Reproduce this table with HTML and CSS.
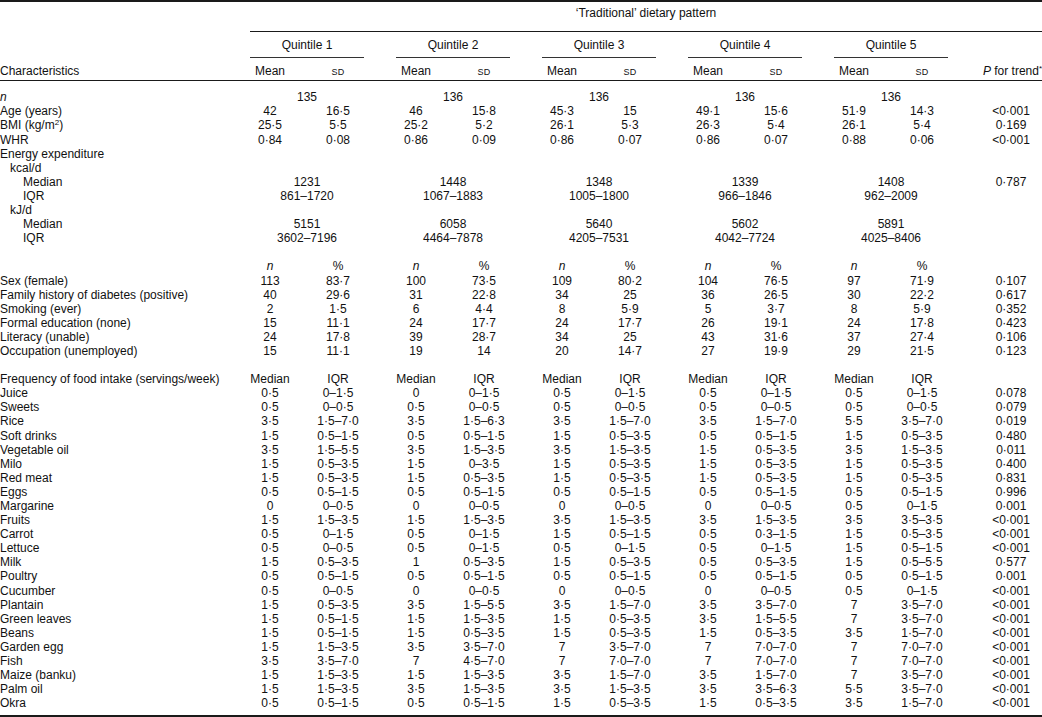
FILE: index.html
```html
<!DOCTYPE html>
<html lang="en">
<head>
<meta charset="utf-8">
<title>Traditional dietary pattern</title>
<link rel="stylesheet" href="styles.css">
</head>
<body>
<table class="t">
<colgroup>
<col class="c-lab">
<col class="c-m"><col class="c-s">
<col class="c-m"><col class="c-s">
<col class="c-m"><col class="c-s">
<col class="c-m"><col class="c-s">
<col class="c-m"><col class="c-s">
<col class="c-p">
</colgroup>
<thead>
<tr class="h1"><th></th><th colspan="11" class="trad">‘Traditional’ dietary pattern</th></tr>
<tr class="h2"><th></th><th colspan="2" class="q"><div>Quintile 1</div></th><th colspan="2" class="q"><div>Quintile 2</div></th><th colspan="2" class="q"><div>Quintile 3</div></th><th colspan="2" class="q"><div>Quintile 4</div></th><th colspan="2" class="q"><div>Quintile 5</div></th><th></th></tr>
<tr class="h3"><th class="lab">Characteristics</th><th class="m">Mean</th><th class="s"><span class="sc">sd</span></th><th class="m">Mean</th><th class="s"><span class="sc">sd</span></th><th class="m">Mean</th><th class="s"><span class="sc">sd</span></th><th class="m">Mean</th><th class="s"><span class="sc">sd</span></th><th class="m">Mean</th><th class="s"><span class="sc">sd</span></th><th class="p"><i>P</i> for trend<sup>*</sup></th></tr>
</thead>
<tbody>
<tr class="sp first"><td><i>n</i></td><td colspan="2">135</td><td colspan="2">136</td><td colspan="2">136</td><td colspan="2">136</td><td colspan="2">136</td><td></td></tr>
<tr class="r"><td>Age (years)</td><td>42</td><td>16·5</td><td>46</td><td>15·8</td><td>45·3</td><td>15</td><td>49·1</td><td>15·6</td><td>51·9</td><td>14·3</td><td>&lt;0·001</td></tr>
<tr class="r"><td>BMI (kg/m<sup>2</sup>)</td><td>25·5</td><td>5·5</td><td>25·2</td><td>5·2</td><td>26·1</td><td>5·3</td><td>26·3</td><td>5·4</td><td>26·1</td><td>5·4</td><td>0·169</td></tr>
<tr class="r"><td>WHR</td><td>0·84</td><td>0·08</td><td>0·86</td><td>0·09</td><td>0·86</td><td>0·07</td><td>0·86</td><td>0·07</td><td>0·88</td><td>0·06</td><td>&lt;0·001</td></tr>
<tr class="r"><td>Energy expenditure</td></tr>
<tr class="r"><td class="i1">kcal/d</td></tr>
<tr class="sp"><td class="i2">Median</td><td colspan="2">1231</td><td colspan="2">1448</td><td colspan="2">1348</td><td colspan="2">1339</td><td colspan="2">1408</td><td>0·787</td></tr>
<tr class="sp"><td class="i2">IQR</td><td colspan="2">861–1720</td><td colspan="2">1067–1883</td><td colspan="2">1005–1800</td><td colspan="2">966–1846</td><td colspan="2">962–2009</td><td></td></tr>
<tr class="r"><td class="i1">kJ/d</td></tr>
<tr class="sp"><td class="i2">Median</td><td colspan="2">5151</td><td colspan="2">6058</td><td colspan="2">5640</td><td colspan="2">5602</td><td colspan="2">5891</td><td></td></tr>
<tr class="sp"><td class="i2">IQR</td><td colspan="2">3602–7196</td><td colspan="2">4464–7878</td><td colspan="2">4205–7531</td><td colspan="2">4042–7724</td><td colspan="2">4025–8406</td><td></td></tr>
<tr class="r"><td>&nbsp;</td></tr>
<tr class="r"><td></td><td><i>n</i></td><td>%</td><td><i>n</i></td><td>%</td><td><i>n</i></td><td>%</td><td><i>n</i></td><td>%</td><td><i>n</i></td><td>%</td><td></td></tr>
<tr class="r"><td>Sex (female)</td><td>113</td><td>83·7</td><td>100</td><td>73·5</td><td>109</td><td>80·2</td><td>104</td><td>76·5</td><td>97</td><td>71·9</td><td>0·107</td></tr>
<tr class="r"><td>Family history of diabetes (positive)</td><td>40</td><td>29·6</td><td>31</td><td>22·8</td><td>34</td><td>25</td><td>36</td><td>26·5</td><td>30</td><td>22·2</td><td>0·617</td></tr>
<tr class="r"><td>Smoking (ever)</td><td>2</td><td>1·5</td><td>6</td><td>4·4</td><td>8</td><td>5·9</td><td>5</td><td>3·7</td><td>8</td><td>5·9</td><td>0·352</td></tr>
<tr class="r"><td>Formal education (none)</td><td>15</td><td>11·1</td><td>24</td><td>17·7</td><td>24</td><td>17·7</td><td>26</td><td>19·1</td><td>24</td><td>17·8</td><td>0·423</td></tr>
<tr class="r"><td>Literacy (unable)</td><td>24</td><td>17·8</td><td>39</td><td>28·7</td><td>34</td><td>25</td><td>43</td><td>31·6</td><td>37</td><td>27·4</td><td>0·106</td></tr>
<tr class="r"><td>Occupation (unemployed)</td><td>15</td><td>11·1</td><td>19</td><td>14</td><td>20</td><td>14·7</td><td>27</td><td>19·9</td><td>29</td><td>21·5</td><td>0·123</td></tr>
<tr class="r"><td>&nbsp;</td></tr>
<tr class="r"><td>Frequency of food intake (servings/week)</td><td>Median</td><td>IQR</td><td>Median</td><td>IQR</td><td>Median</td><td>IQR</td><td>Median</td><td>IQR</td><td>Median</td><td>IQR</td><td></td></tr>
<tr class="r"><td>Juice</td><td>0·5</td><td>0–1·5</td><td>0</td><td>0–1·5</td><td>0·5</td><td>0–1·5</td><td>0·5</td><td>0–1·5</td><td>0·5</td><td>0–1·5</td><td>0·078</td></tr>
<tr class="r"><td>Sweets</td><td>0·5</td><td>0–0·5</td><td>0·5</td><td>0–0·5</td><td>0·5</td><td>0–0·5</td><td>0·5</td><td>0–0·5</td><td>0·5</td><td>0–0·5</td><td>0·079</td></tr>
<tr class="r"><td>Rice</td><td>3·5</td><td>1·5–7·0</td><td>3·5</td><td>1·5–6·3</td><td>3·5</td><td>1·5–7·0</td><td>3·5</td><td>1·5–7·0</td><td>5·5</td><td>3·5–7·0</td><td>0·019</td></tr>
<tr class="r"><td>Soft drinks</td><td>1·5</td><td>0·5–1·5</td><td>0·5</td><td>0·5–1·5</td><td>1·5</td><td>0·5–3·5</td><td>0·5</td><td>0·5–1·5</td><td>1·5</td><td>0·5–3·5</td><td>0·480</td></tr>
<tr class="r"><td>Vegetable oil</td><td>3·5</td><td>1·5–5·5</td><td>3·5</td><td>1·5–3·5</td><td>3·5</td><td>1·5–3·5</td><td>1·5</td><td>0·5–3·5</td><td>3·5</td><td>1·5–3·5</td><td>0·011</td></tr>
<tr class="r"><td>Milo</td><td>1·5</td><td>0·5–3·5</td><td>1·5</td><td>0–3·5</td><td>1·5</td><td>0·5–3·5</td><td>1·5</td><td>0·5–3·5</td><td>1·5</td><td>0·5–3·5</td><td>0·400</td></tr>
<tr class="r"><td>Red meat</td><td>1·5</td><td>0·5–3·5</td><td>1·5</td><td>0·5–3·5</td><td>1·5</td><td>0·5–3·5</td><td>1·5</td><td>0·5–3·5</td><td>1·5</td><td>0·5–3·5</td><td>0·831</td></tr>
<tr class="r"><td>Eggs</td><td>0·5</td><td>0·5–1·5</td><td>0·5</td><td>0·5–1·5</td><td>0·5</td><td>0·5–1·5</td><td>0·5</td><td>0·5–1·5</td><td>0·5</td><td>0·5–1·5</td><td>0·996</td></tr>
<tr class="r"><td>Margarine</td><td>0</td><td>0–0·5</td><td>0</td><td>0–0·5</td><td>0</td><td>0–0·5</td><td>0</td><td>0–0·5</td><td>0·5</td><td>0–1·5</td><td>0·001</td></tr>
<tr class="r"><td>Fruits</td><td>1·5</td><td>1·5–3·5</td><td>1·5</td><td>1·5–3·5</td><td>3·5</td><td>1·5–3·5</td><td>3·5</td><td>1·5–3·5</td><td>3·5</td><td>3·5–3·5</td><td>&lt;0·001</td></tr>
<tr class="r"><td>Carrot</td><td>0·5</td><td>0–1·5</td><td>0·5</td><td>0–1·5</td><td>1·5</td><td>0·5–1·5</td><td>0·5</td><td>0·3–1·5</td><td>1·5</td><td>0·5–3·5</td><td>&lt;0·001</td></tr>
<tr class="r"><td>Lettuce</td><td>0·5</td><td>0–0·5</td><td>0·5</td><td>0–1·5</td><td>0·5</td><td>0–1·5</td><td>0·5</td><td>0–1·5</td><td>1·5</td><td>0·5–1·5</td><td>&lt;0·001</td></tr>
<tr class="r"><td>Milk</td><td>1·5</td><td>0·5–3·5</td><td>1</td><td>0·5–3·5</td><td>1·5</td><td>0·5–3·5</td><td>0·5</td><td>0·5–3·5</td><td>1·5</td><td>0·5–5·5</td><td>0·577</td></tr>
<tr class="r"><td>Poultry</td><td>0·5</td><td>0·5–1·5</td><td>0·5</td><td>0·5–1·5</td><td>0·5</td><td>0·5–1·5</td><td>0·5</td><td>0·5–1·5</td><td>0·5</td><td>0·5–1·5</td><td>0·001</td></tr>
<tr class="r"><td>Cucumber</td><td>0·5</td><td>0–0·5</td><td>0</td><td>0–0·5</td><td>0</td><td>0–0·5</td><td>0</td><td>0–0·5</td><td>0·5</td><td>0–1·5</td><td>&lt;0·001</td></tr>
<tr class="r"><td>Plantain</td><td>1·5</td><td>0·5–3·5</td><td>3·5</td><td>1·5–5·5</td><td>3·5</td><td>1·5–7·0</td><td>3·5</td><td>3·5–7·0</td><td>7</td><td>3·5–7·0</td><td>&lt;0·001</td></tr>
<tr class="r"><td>Green leaves</td><td>1·5</td><td>0·5–1·5</td><td>1·5</td><td>1·5–3·5</td><td>1·5</td><td>0·5–3·5</td><td>3·5</td><td>1·5–5·5</td><td>7</td><td>3·5–7·0</td><td>&lt;0·001</td></tr>
<tr class="r"><td>Beans</td><td>1·5</td><td>0·5–1·5</td><td>1·5</td><td>0·5–3·5</td><td>1·5</td><td>0·5–3·5</td><td>1·5</td><td>0·5–3·5</td><td>3·5</td><td>1·5–7·0</td><td>&lt;0·001</td></tr>
<tr class="r"><td>Garden egg</td><td>1·5</td><td>1·5–3·5</td><td>3·5</td><td>3·5–7·0</td><td>7</td><td>3·5–7·0</td><td>7</td><td>7·0–7·0</td><td>7</td><td>7·0–7·0</td><td>&lt;0·001</td></tr>
<tr class="r"><td>Fish</td><td>3·5</td><td>3·5–7·0</td><td>7</td><td>4·5–7·0</td><td>7</td><td>7·0–7·0</td><td>7</td><td>7·0–7·0</td><td>7</td><td>7·0–7·0</td><td>&lt;0·001</td></tr>
<tr class="r"><td>Maize (banku)</td><td>1·5</td><td>1·5–3·5</td><td>1·5</td><td>1·5–3·5</td><td>3·5</td><td>1·5–7·0</td><td>3·5</td><td>1·5–7·0</td><td>7</td><td>3·5–7·0</td><td>&lt;0·001</td></tr>
<tr class="r"><td>Palm oil</td><td>1·5</td><td>1·5–3·5</td><td>3·5</td><td>1·5–3·5</td><td>3·5</td><td>1·5–3·5</td><td>3·5</td><td>3·5–6·3</td><td>5·5</td><td>3·5–7·0</td><td>&lt;0·001</td></tr>
<tr class="r last"><td>Okra</td><td>0·5</td><td>0·5–1·5</td><td>0·5</td><td>0·5–1·5</td><td>1·5</td><td>0·5–3·5</td><td>1·5</td><td>0·5–3·5</td><td>3·5</td><td>1·5–7·0</td><td>&lt;0·001</td></tr>
</tbody>
</table>
</body>
</html>
```

FILE: styles.css
```css
html, body {
  margin: 0;
  padding: 0;
  background: #ffffff;
}

body {
  font-family: "Liberation Sans", Arial, sans-serif;
  font-size: 12px;
  color: #111111;
}

.t {
  width: 1042px;
  table-layout: fixed;
  border-collapse: separate;
  border-spacing: 0;
  border-top: 2px solid #1a1a1a;
  border-bottom: 2px solid #1a1a1a;
}

col.c-lab { width: 250px; }
col.c-m { width: 40px; }
col.c-s { width: 106px; }
col.c-p { width: 62px; }

.t th,
.t td {
  padding: 0;
  line-height: 14.1px;
  font-weight: normal;
  vertical-align: baseline;
  white-space: nowrap;
  text-align: left;
}

/* header row 1 */
.h1 th {
  padding-top: 4px;
  padding-bottom: 11px;
}
.h1 .trad {
  text-align: center;
  border-bottom: 1px solid #1a1a1a;
}

/* header row 2 */
.h2 .q {
  text-align: center;
  padding-right: 32px;
}
.h2 .q div {
  padding-top: 6px;
  padding-bottom: 5px;
  border-bottom: 1px solid #333333;
}

/* header row 3 */
.h3 th {
  padding-top: 6px;
  padding-bottom: 2px;
  border-bottom: 1px solid #1a1a1a;
}
.h3 .m { text-align: center; }
.h3 .s {
  text-align: center;
  padding-left: 22px;
  padding-right: 32px;
}
.h3 .p { text-align: right; }

.sc {
  font-variant: small-caps;
  font-size: 13px;
  letter-spacing: 0.3px;
}

sup {
  font-size: 8px;
  line-height: 0;
  vertical-align: 4px;
}

/* body: regular rows */
.r td:nth-child(2n) {
  text-align: center;
}
.r td:nth-child(2n+3) {
  text-align: center;
  padding-left: 22px;
  padding-right: 32px;
}

/* body: spanning rows */
.sp td:nth-child(n+2) {
  text-align: center;
  padding-right: 32px;
}
.sp td:nth-child(7) {
  padding-right: 0;
}

.t td.i1 { padding-left: 10px; }
.t td.i2 { padding-left: 23px; }

.first td { padding-top: 9px; }
.last td { padding-bottom: 5px; }
```
